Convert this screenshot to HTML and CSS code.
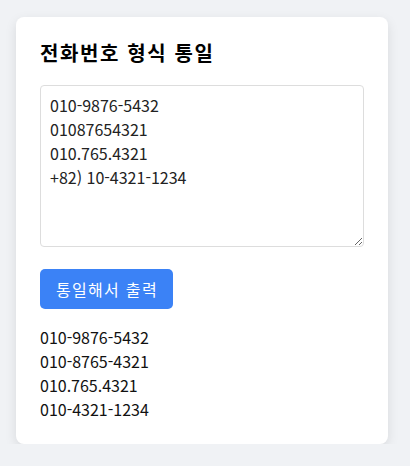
FILE: index.html
```html
<!DOCTYPE html>
<html lang="ko">
<head>
<meta charset="utf-8">
<link rel="stylesheet" href="styles.css">
</head>
<body>
<div class="card">
  <h2 class="title">전화번호 형식 통일</h2>
  <textarea class="input">010-9876-5432
01087654321
010.765.4321
+82) 10-4321-1234</textarea>
  <div class="actions"><button class="btn">통일해서 출력</button></div>
  <div class="output">
    <div>010-9876-5432</div>
    <div>010-8765-4321</div>
    <div>010.765.4321</div>
    <div>010-4321-1234</div>
  </div>
</div>
</body>
</html>
```

FILE: styles.css
```css
html, body {
  margin: 0;
  padding: 0;
  background: #f0f2f5;
}
body {
  padding: 17px 22px 0 16px;
  font-family: "Noto Sans CJK KR", "Noto Sans", sans-serif;
  color: #111;
}
.card {
  width: 372px;
  box-sizing: border-box;
  background: #fff;
  border-radius: 8px;
  padding: 24px 24px 23px 24px;
  box-shadow: 0 4px 12px rgba(0,0,0,0.1);
  display: flex;
  flex-direction: column;
}
.title {
  margin: 0 0 20px 0;
  font-size: 20px;
  line-height: 24px;
  font-weight: 700;
  letter-spacing: 1.6px;
  color: #000;
}
.input {
  display: block;
  width: 100%;
  height: 162px;
  box-sizing: border-box;
  border: 1px solid #ddd;
  border-radius: 4px;
  padding: 7px 9px;
  font-family: "Noto Sans CJK KR", "Noto Sans", sans-serif;
  font-size: 16px;
  line-height: 24px;
  color: #222;
  margin: 0 0 22px 0;
  resize: vertical;
}
.actions {
  display: flex;
}
.btn {
  height: 40px;
  padding: 0 15px 0 16px;
  border: none;
  border-radius: 5px;
  background: #3b82f6;
  color: #fff;
  font-family: "Noto Sans CJK KR", "Noto Sans", sans-serif;
  font-size: 16px;
  letter-spacing: 1.3px;
  cursor: pointer;
}
.output {
  margin-top: 16px;
  font-size: 16px;
  line-height: 24px;
  color: #111;
}
```
